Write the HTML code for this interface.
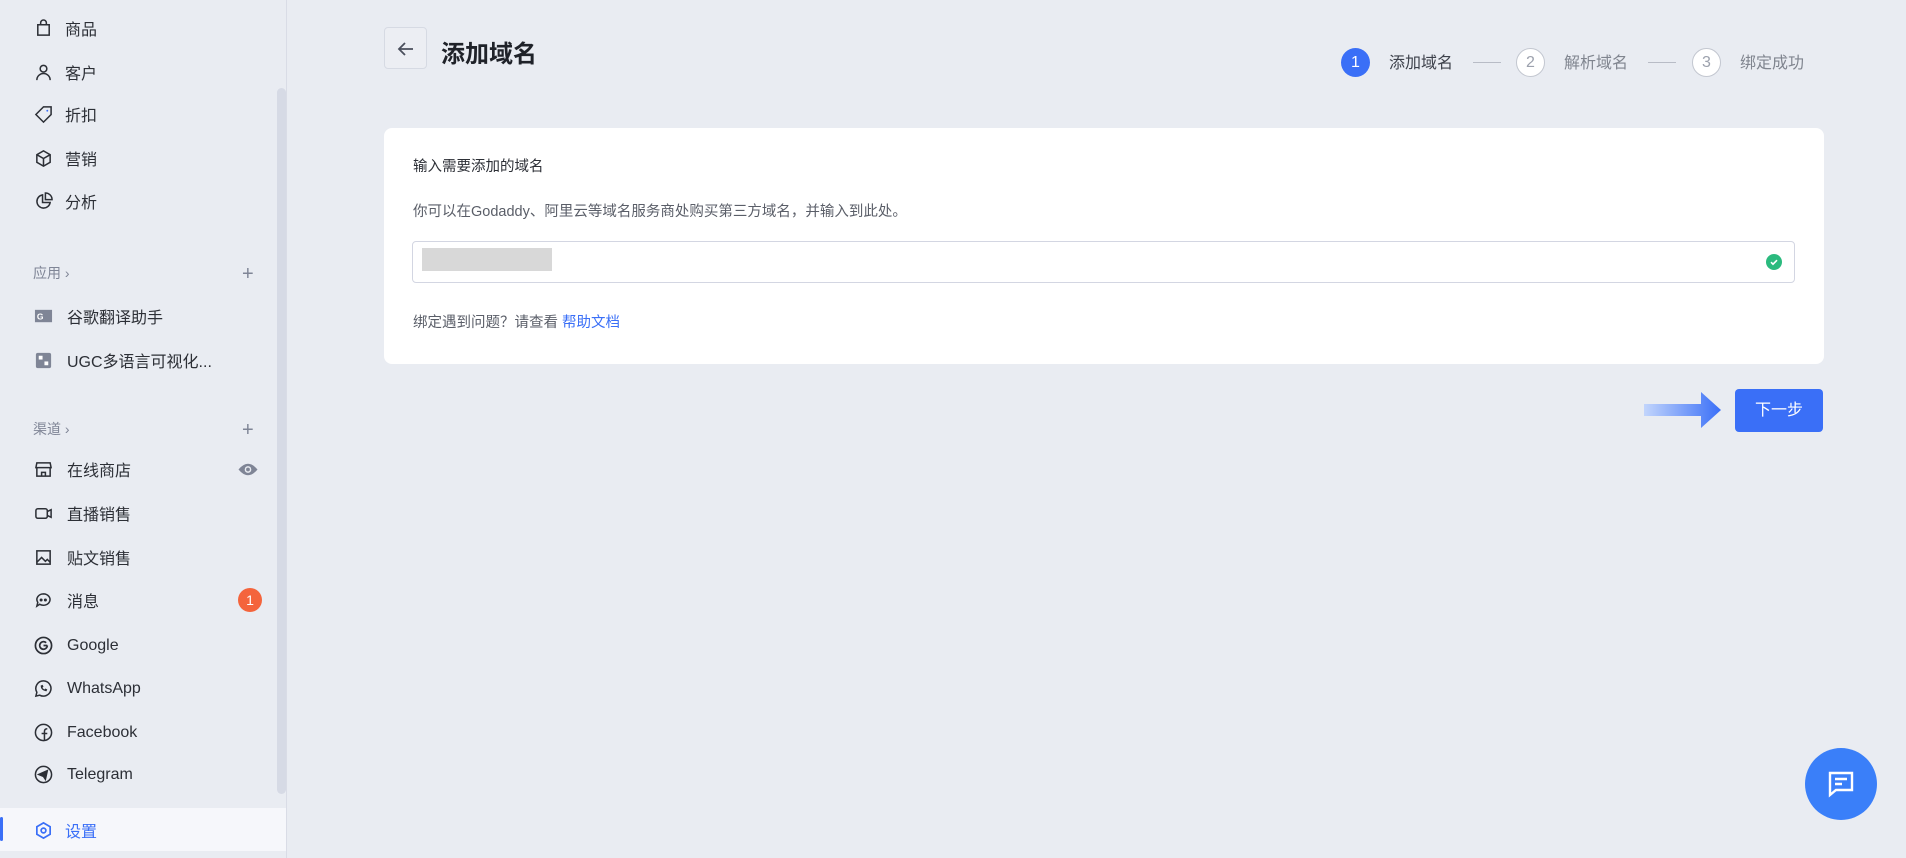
<!DOCTYPE html>
<html><head><meta charset="utf-8"><style>
*{margin:0;padding:0;box-sizing:border-box}
body{width:1906px;height:858px;overflow:hidden;background:#e9ecf2;font-family:"Liberation Sans","Noto Sans CJK SC",sans-serif;color:#2c2f36;position:relative}
.sb{position:absolute;left:0;top:0;width:287px;height:858px;background:#e9ecf2;border-right:1px solid #d9dce6}
.it{position:absolute;left:0;width:286px;height:40px;display:flex;align-items:center;font-size:16px;color:#2c2f36}
.it svg{position:absolute;left:34px;width:19px;height:19px}
.it span{position:absolute;left:65px}
.sec{position:absolute;left:33px;font-size:14px;color:#7f8596}
.plus{position:absolute;left:242px;font-size:20px;color:#7f8596;font-weight:300}
.scroll{position:absolute;left:277px;top:88px;width:9px;height:706px;background:#d6dae5;border-radius:5px}
.lat span{top:12px}
</style></head><body>
<div class="sb">
<div class="scroll"></div>
<div class="it" style="top:8px"><svg viewBox="0 0 20 20" fill="none" stroke="#2c2f36" stroke-width="1.6"><path d="M4 6h12v11H4z"/><path d="M7 6V4a3 3 0 0 1 6 0v2"/></svg><span>商品</span></div>
<div class="it" style="top:52px"><svg viewBox="0 0 20 20" fill="none" stroke="#2c2f36" stroke-width="1.6"><circle cx="10" cy="6" r="3.5"/><path d="M3 18a7 7 0 0 1 14 0"/></svg><span>客户</span></div>
<div class="it" style="top:94px"><svg viewBox="0 0 20 20" fill="none" stroke="#2c2f36" stroke-width="1.6"><path d="M2 10l8-8h8v8l-8 8z"/><circle cx="14" cy="6" r="1" fill="#3a6ff7" stroke="none"/></svg><span>折扣</span></div>
<div class="it" style="top:138px"><svg viewBox="0 0 20 20" fill="none" stroke="#2c2f36" stroke-width="1.6"><path d="M10 2l7 4v8l-7 4-7-4V6z"/><path d="M3 6l7 4 7-4M10 10v8"/></svg><span>营销</span></div>
<div class="it" style="top:181px"><svg viewBox="0 0 20 20" fill="none" stroke="#2c2f36" stroke-width="1.6"><path d="M9 3a7 7 0 1 0 8 8H9z"/><path d="M12 1v7h7a7 7 0 0 0-7-7z"/></svg><span>分析</span></div>
<div class="sec" style="top:263px">应用 ›</div><div class="plus" style="top:263px">+</div>
<div class="it" style="top:296px"><svg viewBox="0 0 20 20"><rect x="1" y="3" width="18" height="13" fill="#7f8596"/><text x="3" y="13" font-size="9" fill="#fff" font-family="Liberation Sans" font-weight="bold">G</text></svg><span style="left:67px">谷歌翻译助手</span></div>
<div class="it" style="top:340px"><svg viewBox="0 0 20 20"><rect x="2" y="2" width="16" height="16" rx="2" fill="#7f8596"/><rect x="5" y="5" width="4" height="4" fill="#fff"/><rect x="11" y="11" width="4" height="4" fill="#fff"/></svg><span style="left:67px">UGC多语言可视化...</span></div>
<div class="sec" style="top:419px">渠道 ›</div><div class="plus" style="top:419px">+</div>
<div class="it" style="top:449px"><svg viewBox="0 0 20 20" fill="none" stroke="#2c2f36" stroke-width="1.6"><path d="M3 3h14l1 5H2z"/><path d="M3 8v9h14V8M8 17v-4h4v4"/></svg><span style="left:67px">在线商店</span><svg style="left:237px;width:22px" viewBox="0 0 22 20"><path d="M1 10q10-12 20 0q-10 12-20 0z" fill="#7f8596"/><circle cx="11" cy="10" r="3.5" fill="#e9ecf2"/><circle cx="11" cy="10" r="2" fill="#7f8596"/></svg></div>
<div class="it" style="top:493px"><svg viewBox="0 0 20 20" fill="none" stroke="#2c2f36" stroke-width="1.6"><rect x="2" y="5" width="12" height="10" rx="2"/><path d="M14 8l4-2v8l-4-2"/></svg><span style="left:67px">直播销售</span></div>
<div class="it" style="top:537px"><svg viewBox="0 0 20 20" fill="none" stroke="#2c2f36" stroke-width="1.6"><rect x="3" y="3" width="14" height="14"/><path d="M3 15l5-5 4 4 2-2 3 3"/></svg><span style="left:67px">贴文销售</span></div>
<div class="it" style="top:580px"><svg viewBox="0 0 20 20" fill="none" stroke="#2c2f36" stroke-width="1.6"><path d="M10 3a7 6 0 1 1-4 11l-3 2 1-4a7 6 0 0 1 6-9z"/><circle cx="7.5" cy="9.5" r=".8" fill="#2c2f36"/><circle cx="12" cy="9.5" r=".8" fill="#2c2f36"/></svg><span style="left:67px">消息</span><div style="position:absolute;left:238px;width:24px;height:24px;border-radius:50%;background:#f4643c;color:#fff;font-size:14px;text-align:center;line-height:24px">1</div></div>
<div class="it" style="top:625px"><svg viewBox="0 0 20 20" fill="none" stroke="#2c2f36" stroke-width="1.8"><circle cx="10" cy="10" r="8.5"/><path d="M14 10h-4M14 10a4 4 0 1 1-1.2-2.9"/></svg><span style="left:67px;top:12px">Google</span></div>
<div class="it" style="top:668px"><svg viewBox="0 0 20 20" fill="none" stroke="#2c2f36" stroke-width="1.6"><path d="M10 2a8 8 0 1 1-4 15l-4 1 1-4a8 8 0 0 1 7-12z"/><path d="M7 7q0 5 6 6l1-2-2-1-1 1q-2-1-2-2l1-1-1-2z" fill="#2c2f36" stroke="none"/></svg><span style="left:67px;top:12px">WhatsApp</span></div>
<div class="it" style="top:712px"><svg viewBox="0 0 20 20" fill="none" stroke="#2c2f36" stroke-width="1.6"><circle cx="10" cy="10" r="8.5"/><path d="M11 18v-9q0-3 3-3M8 11h6"/></svg><span style="left:67px;top:12px">Facebook</span></div>
<div class="it" style="top:754px"><svg viewBox="0 0 20 20" fill="none" stroke="#2c2f36" stroke-width="1.6"><circle cx="10" cy="10" r="8.5"/><path d="M5 10l9-4-2 9-2-3z" fill="#2c2f36"/></svg><span style="left:67px;top:12px">Telegram</span></div>
<div style="position:absolute;left:0;top:808px;width:286px;height:43px;background:#f6f7fb"></div>
<div style="position:absolute;left:0;top:817px;width:3px;height:24px;background:#3a6ff7;border-radius:2px"></div>
<div class="it" style="top:810px;color:#3a6ff7"><svg viewBox="0 0 20 20" fill="none" stroke="#3a6ff7" stroke-width="1.8"><path d="M10 2l7 4v8l-7 4-7-4V6z"/><circle cx="10" cy="10" r="2.5"/></svg><span>设置</span></div>
</div>

<div style="position:absolute;left:384px;top:27px;width:43px;height:42px;border:1px solid #d6dae3;border-radius:4px;background:#eceef3"><svg style="position:absolute;left:11px;top:11px" width="20" height="20" viewBox="0 0 20 20" fill="none" stroke="#4a4f5c" stroke-width="1.8"><path d="M17 10H3M9 4l-6 6 6 6"/></svg></div>
<div style="position:absolute;left:441px;top:34px;font-size:24px;font-weight:bold;color:#1f2229">添加域名</div>

<div style="position:absolute;left:1341px;top:48px;width:29px;height:29px;border-radius:50%;background:#3a6ff7;color:#fff;font-size:16px;text-align:center;line-height:29px">1</div>
<div style="position:absolute;left:1389px;top:49px;font-size:16px;color:#3d414b">添加域名</div>
<div style="position:absolute;left:1473px;top:62px;width:28px;height:1px;background:#b8bcc6"></div>
<div style="position:absolute;left:1516px;top:48px;width:29px;height:29px;border-radius:50%;border:1px solid #c3c7d0;background:#fff;color:#9ca1ad;font-size:16px;text-align:center;line-height:27px">2</div>
<div style="position:absolute;left:1564px;top:49px;font-size:16px;color:#80858f">解析域名</div>
<div style="position:absolute;left:1648px;top:62px;width:28px;height:1px;background:#b8bcc6"></div>
<div style="position:absolute;left:1692px;top:48px;width:29px;height:29px;border-radius:50%;border:1px solid #c3c7d0;background:#fff;color:#9ca1ad;font-size:16px;text-align:center;line-height:27px">3</div>
<div style="position:absolute;left:1740px;top:49px;font-size:16px;color:#80858f">绑定成功</div>

<div style="position:absolute;left:384px;top:128px;width:1440px;height:236px;background:#fff;border-radius:8px"></div>
<div style="position:absolute;left:413px;top:155px;font-size:14.5px;color:#2c2f36">输入需要添加的域名</div>
<div style="position:absolute;left:413px;top:200px;font-size:14.5px;color:#5a5e68">你可以在Godaddy、阿里云等域名服务商处购买第三方域名，并输入到此处。</div>
<div style="position:absolute;left:412px;top:241px;width:1383px;height:42px;border:1px solid #d3d6e2;border-radius:4px;background:#fff"></div>
<div style="position:absolute;left:422px;top:248px;width:130px;height:23px;background:#d8d8d8"></div>
<div style="position:absolute;left:1766px;top:254px;width:16px;height:16px;border-radius:50%;background:#2bba7e"><svg width="16" height="16" viewBox="0 0 16 16" fill="none" stroke="#fff" stroke-width="1.6"><path d="M5 8.2l2 2 4-4"/></svg></div>
<div style="position:absolute;left:413px;top:311px;font-size:14.5px;color:#5a5e68">绑定遇到问题？请查看 <span style="color:#3a6ff7">帮助文档</span></div>

<svg style="position:absolute;left:1643px;top:391px" width="80" height="38" viewBox="0 0 80 38"><defs><linearGradient id="g" x1="0" x2="1"><stop offset="0" stop-color="#c2d5fc"/><stop offset="1" stop-color="#3a6ff7"/></linearGradient></defs><path d="M1 13h57V1l20 18-20 18V25H1z" fill="url(#g)"/></svg>
<div style="position:absolute;left:1735px;top:389px;width:88px;height:43px;border-radius:4px;background:#3a6ff7;color:#fff;font-size:16px;text-align:center;line-height:43px">下一步</div>

<div style="position:absolute;left:1805px;top:748px;width:72px;height:72px;border-radius:50%;background:#3a7ff9"><svg style="position:absolute;left:21px;top:21px" width="30" height="30" viewBox="0 0 30 30" fill="none" stroke="#fff" stroke-width="2.4"><path d="M4 4h22v17H10l-6 5z"/><path d="M9 10h12M9 15h7"/></svg></div>
</body></html>
